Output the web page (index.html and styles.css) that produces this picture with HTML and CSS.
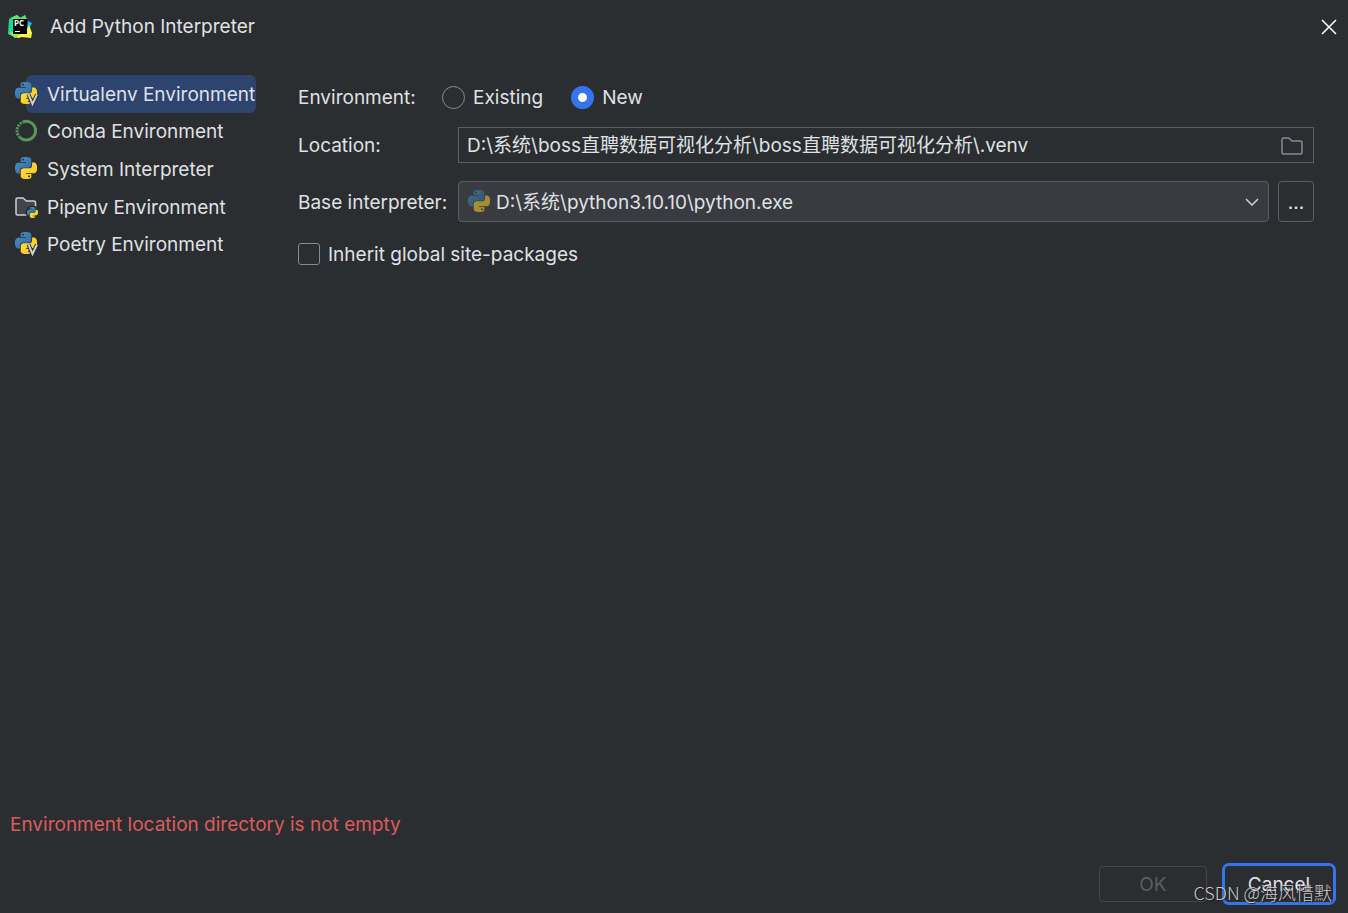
FILE: index.html
```html
<!DOCTYPE html>
<html lang="en">
<head>
    <meta charset="UTF-8">
    <meta name="viewport" content="width=device-width, initial-scale=1.0">
    <title>Add Python Interpreter</title>
    <link rel="stylesheet" href="styles.css">
</head>
<body>

<!-- Shared icon shapes -->
<svg class="symbols" aria-hidden="true">
    <defs>
        <linearGradient id="blue" x1="0" y1="0" x2="1" y2="1">
            <stop offset="0" stop-color="#4b90c8"/>
            <stop offset="1" stop-color="#306998"/>
        </linearGradient>
        <linearGradient id="yellow" x1="0" y1="0" x2="1" y2="1">
            <stop offset="0" stop-color="#ffdf4a"/>
            <stop offset="1" stop-color="#f9c70e"/>
        </linearGradient>
    </defs>
    <symbol id="python" viewBox="0 0 24 24">
        <path class="snake-top" d="M14.25.18l.9.2.73.26.59.3.45.32.34.34.25.34.16.33.1.3.04.26.02.2-.01.13V8.5l-.05.63-.13.55-.21.46-.26.38-.3.31-.33.25-.35.19-.35.14-.33.1-.3.07-.26.04-.21.02H8.77l-.69.05-.59.14-.5.22-.41.27-.33.32-.27.35-.2.36-.15.37-.1.35-.07.32-.04.27-.02.21v3.06H3.17l-.21-.03-.28-.07-.32-.12-.35-.18-.36-.26-.36-.36-.35-.46-.32-.59-.28-.73-.21-.88-.14-1.05-.05-1.23.06-1.22.16-1.04.24-.87.32-.71.36-.57.4-.44.42-.33.42-.24.4-.16.36-.1.32-.05.24-.01h.16l.06.01h8.16v-.83H6.18l-.01-2.75-.02-.37.05-.34.11-.31.17-.28.25-.26.31-.23.38-.2.44-.18.51-.15.58-.12.64-.1.71-.06.77-.04.84-.02 1.27.05zm-6.3 1.98l-.23.33-.08.41.08.41.23.34.33.22.41.09.41-.09.33-.22.23-.34.08-.41-.08-.41-.23-.33-.33-.22-.41-.09-.41.09z"/>
        <path class="snake-bottom" d="M21.1 6.11l.28.06.32.12.35.18.36.27.36.35.35.47.32.59.28.73.21.88.14 1.04.05 1.23-.06 1.23-.16 1.04-.24.86-.32.71-.36.57-.4.45-.42.33-.42.24-.4.16-.36.09-.32.05-.24.02-.16-.01h-8.22v.82h5.84l.01 2.76.02.36-.05.34-.11.31-.17.29-.25.25-.31.24-.38.2-.44.17-.51.15-.58.13-.64.09-.71.07-.77.04-.84.01-1.27-.04-1.07-.14-.9-.2-.73-.25-.59-.3-.45-.33-.34-.34-.25-.34-.16-.33-.1-.3-.04-.25-.02-.2.01-.13v-5.34l.05-.64.13-.54.21-.46.26-.38.3-.32.33-.24.35-.2.35-.14.33-.1.3-.06.26-.04.21-.02.13-.01h5.84l.69-.05.59-.14.5-.21.41-.28.33-.32.27-.35.2-.36.15-.36.1-.35.07-.32.04-.28.02-.21V6.07h2.09l.14.01zm-6.47 14.25l-.23.33-.08.41.08.41.23.33.33.23.41.08.41-.08.33-.23.23-.33.08-.41-.08-.41-.23-.33-.33-.23-.41-.08-.41.08z"/>
    </symbol>
    <symbol id="python-v" viewBox="0 0 24 24">
        <use href="#python" x="0" y="0" width="22" height="22"/>
        <path class="badge-edge" d="M13.500 12.500l4 9.500 4.500-9.500"/>
        <path class="badge-line" d="M13.500 12.500l4 9.500 4.500-9.500"/>
    </symbol>
</svg>

<!-- Title Bar -->
<header class="titlebar">
    <svg class="app-icon" viewBox="0 0 26 26" aria-hidden="true">
        <path fill="#21d789" d="M1 5l8-4 4 3 4-3 2 4-9 8-2 11-8-4z"/>
        <path fill="#5be36f" d="M2 4l7-3 3 3 5-3 1 4H6z"/>
        <path fill="#07c3f2" d="M20 7l4 2-2 4-3 2z"/>
        <path fill="#fcf84a" d="M7 23l3 1 4-1 9 1 1-5-3-8-4 8-12 2z"/>
        <path fill="#8bea5f" d="M1 19l6 5 6-4-9-2z"/>
        <path fill="#000" d="M5 5h14v15H5z"/>
        <text class="app-letters" x="6" y="12">PC</text>
        <path fill="#fff" d="M7 17h5v1H7z"/>
    </svg>
    <h1>Add Python Interpreter</h1>
    <button class="close" type="button" aria-label="Close">
        <svg width="16" height="16" viewBox="0 0 16 16"><path d="M1 1l14 14M15 1L1 15"/></svg>
    </button>
</header>

<main class="content">
    <!-- Interpreter Types -->
    <nav class="sidebar">
        <a class="env selected" href="#virtualenv"><svg class="icon"><use href="#python-v"/></svg><span>Virtualenv Environment</span></a>
        <a class="env" href="#conda">
            <svg class="icon" viewBox="0 0 24 24">
                <path class="conda-ring" d="M8 3a9.300 9.300 0 1 1-3 15.500"/>
                <path class="conda-dots" d="M5 18.500A9.300 9.300 0 0 1 8 3"/>
            </svg>
            <span>Conda Environment</span>
        </a>
        <a class="env" href="#system"><svg class="icon" viewBox="0 0 24 24"><use href="#python" width="22" height="22" y="0"/></svg><span>System Interpreter</span></a>
        <a class="env" href="#pipenv">
            <svg class="icon" viewBox="0 0 24 24">
                <path class="folder-fill" d="M1 4.500Q1 3 2.500 3H8l3.500 3H19q1.500 0 1.500 1.500v11q0 1.500-1.500 1.500H2.500Q1 20 1 18.500z"/>
                <circle cx="17.500" cy="17.500" r="7" fill="#2b2d30"/>
                <use href="#python" x="12" y="12" width="11" height="11"/>
            </svg>
            <span>Pipenv Environment</span>
        </a>
        <a class="env" href="#poetry"><svg class="icon"><use href="#python-v"/></svg><span>Poetry Environment</span></a>
    </nav>

    <!-- Environment Settings -->
    <form class="settings" id="settings">
        <div class="row" role="radiogroup" aria-labelledby="envLabel">
            <span id="envLabel" class="env-label">Environment:</span>
            <label class="choice"><input type="radio" name="environment" value="existing"><span>Existing</span></label>
            <label class="choice"><input type="radio" name="environment" value="new" checked><span>New</span></label>
        </div>
        <div class="row location-row">
            <label class="name" for="location">Location:</label>
            <div class="path-field">
                <input type="text" id="location" value="D:\系统\boss直聘数据可视化分析\boss直聘数据可视化分析\.venv">
                <button class="browse" type="button" aria-label="Browse">
                    <svg width="22" height="18" viewBox="0 0 22 18"><path d="M1 2.500Q1 1 2.500 1H7q1 0 2 1l2 2h8.500Q21 4 21 5.500v10q0 1.500-1.500 1.500h-17Q1 17 1 15.500z"/></svg>
                </button>
            </div>
        </div>
        <div class="row base-row">
            <label class="name" for="base">Base interpreter:</label>
            <div class="combo">
                <svg class="combo-icon" aria-hidden="true"><use href="#python"/></svg>
                <select id="base">
                    <option>D:\系统\python3.10.10\python.exe</option>
                </select>
                <svg class="chevron" viewBox="0 0 14 8" aria-hidden="true"><path d="M1 1l6 6 6-6"/></svg>
            </div>
            <button class="more" type="button">...</button>
        </div>
        <label class="choice inherit"><input type="checkbox" name="inherit"><span>Inherit global site-packages</span></label>
    </form>
</main>

<p class="error">Environment location directory is not empty</p>

<!-- Dialog Buttons -->
<footer class="actions">
    <button class="action" type="submit" form="settings" disabled>OK</button>
    <button class="action focused" type="button">Cancel</button>
</footer>

<span class="watermark">CSDN @海风惜默</span>

</body>
</html>
```
FILE: styles.css
```css
/* Global Styles */
* {
    box-sizing: border-box;
}

body {
    margin: 0;
    min-height: 100vh;
    display: flex;
    flex-direction: column;
    position: relative;
    background: #2b2d30;
    color: #dfe1e5;
    font-family: Inter, "Noto Sans CJK SC", sans-serif;
    font-size: 19px;
    line-height: 24px;
}

button, input, select {
    font: inherit;
    color: inherit;
    margin: 0;
}

button {
    padding: 0;
    border: none;
    background: none;
}

.symbols {
    position: absolute;
    width: 0;
    height: 0;
}

.snake-top {
    fill: url(#blue);
}

.snake-bottom {
    fill: url(#yellow);
}

/* Title Bar */
.titlebar {
    display: flex;
    align-items: center;
    height: 53px;
    padding: 0 11px 0 8px;
}

.app-icon {
    width: 26px;
    height: 26px;
    margin-right: 16px;
}

.app-letters {
    font: 700 8px "Open Sans", sans-serif;
    fill: #fff;
}

h1 {
    flex: 1;
    margin: 0;
    font-size: 19px;
    font-weight: 400;
}

.close {
    display: flex;
}

.close path {
    stroke: #fff;
    stroke-width: 1.5;
}

/* Main Area */
.content {
    flex: 1;
    display: flex;
    align-items: flex-start;
    padding: 22px 34px 0 15px;
    gap: 42px;
}

.sidebar {
    flex: none;
    width: 241px;
    min-height: 188px;
    display: grid;
    grid-auto-rows: 1fr;
}

.env {
    display: flex;
    align-items: center;
    gap: 8px;
    color: inherit;
    text-decoration: none;
    white-space: nowrap;
}

.env span, .choice span, .env-label, .name {
    padding-top: 2px;
}

.selected {
    background: #2e436e;
    border-radius: 6px;
    margin-left: 11px;
}

.selected .icon {
    margin-left: -11px;
}

.icon {
    flex: none;
    width: 24px;
    height: 24px;
}

.badge-edge {
    fill: none;
    stroke: #2b2d30;
    stroke-width: 4;
}

.badge-line {
    fill: none;
    stroke: #ced0d6;
    stroke-width: 2;
}

.conda-ring, .conda-dots {
    fill: none;
    stroke: #57965c;
    stroke-width: 3;
}

.conda-dots {
    stroke-dasharray: 2 1;
}

.folder-fill {
    fill: #43454a;
    stroke: #ced0d6;
    stroke-width: 1.5;
}

/* Settings Form */
.settings {
    flex: 1;
    min-width: 0;
    padding-top: 9px;
}

.row {
    display: flex;
    align-items: center;
}

.env-label {
    width: 144px;
}

.name {
    flex: none;
    width: 160px;
}

.choice {
    display: inline-flex;
    align-items: center;
    gap: 8px;
    margin-right: 28px;
}

.choice input {
    appearance: none;
    width: 23px;
    height: 23px;
    border: 1px solid #868a91;
    border-radius: 50%;
}

.choice input:checked {
    border: 7px solid #3574f0;
    background: #fff;
}

.choice input[type="checkbox"] {
    width: 22px;
    height: 22px;
    border-radius: 3px;
}

.location-row {
    margin-top: 17px;
}

.path-field {
    flex: 1;
    display: flex;
    align-items: center;
    height: 36px;
    padding: 2px 10px 0 8px;
    border: 1px solid #5a5d63;
}

.path-field input {
    flex: 1;
    min-width: 0;
    padding: 0;
    border: none;
    outline: none;
    background: none;
}

.browse {
    display: flex;
}

.browse path {
    fill: none;
    stroke: #868a91;
    stroke-width: 1.5;
}

.base-row {
    margin-top: 18px;
}

.combo {
    flex: 1;
    position: relative;
}

.combo select {
    display: block;
    appearance: none;
    width: 100%;
    height: 41px;
    padding: 2px 37px 0;
    border: 1px solid #5a5d63;
    border-radius: 4px;
    background: #393b40;
}

.combo-icon {
    position: absolute;
    left: 10px;
    top: 9px;
    width: 22px;
    height: 22px;
}

.combo-icon {
    opacity: 0.55;
}

.chevron {
    position: absolute;
    right: 10px;
    top: 17px;
    width: 14px;
    height: 8px;
    fill: none;
    stroke: #ced0d6;
    stroke-width: 1.5;
}

.more {
    width: 36px;
    height: 41px;
    margin-left: 9px;
    padding-top: 2px;
    border: 1px solid #5a5d63;
    border-radius: 4px;
}

.inherit {
    margin-top: 19px;
}

/* Error Message */
.error {
    margin: 0 0 26px 10px;
    color: #db5c5c;
}

/* Dialog Buttons */
.actions {
    display: flex;
    justify-content: flex-end;
    align-items: center;
    gap: 15px;
    padding: 0 12px 8px;
}

.action {
    width: 108px;
    height: 36px;
    padding-top: 2px;
    border: 1px solid #43454a;
    border-radius: 4px;
}

.action:disabled {
    color: #5a5d63;
}

.focused {
    width: 114px;
    height: 42px;
    border: 3px solid #3574f0;
    border-radius: 7px;
}

/* Watermark */
.watermark {
    position: absolute;
    right: 16px;
    bottom: 9px;
    font-family: "Noto Sans CJK SC", sans-serif;
    font-size: 18px;
    font-weight: 300;
    color: #c8c9cb;
    text-shadow: 1px 1px 1px #1e1f22;
}
```
